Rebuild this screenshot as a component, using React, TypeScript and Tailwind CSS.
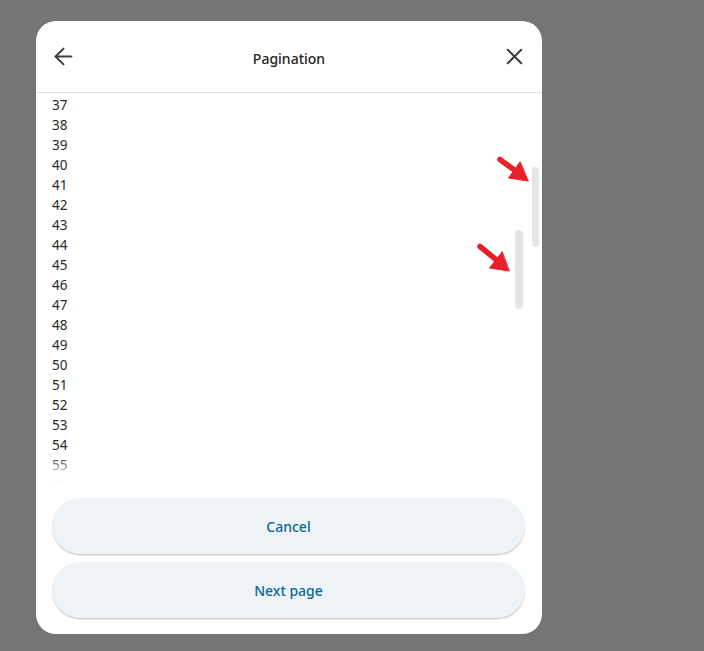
import { ArrowLeft, X } from "lucide-react";

const numbers = Array.from({ length: 20 }, (_, i) => 37 + i);

function Annotations() {
  return (
    <svg className="pointer-events-none absolute left-0 top-0" width="704" height="651" viewBox="0 0 704 651">
      <g fill="#e8202a" stroke="#e8202a" strokeLinecap="round" strokeLinejoin="round">
        <line x1="500" y1="159.5" x2="515" y2="170.5" strokeWidth="5.5" />
        <polygon points="528,181 508.5,178 520,162" strokeWidth="1" />
        <line x1="480" y1="246.5" x2="496" y2="259.5" strokeWidth="5.5" />
        <polygon points="509,271 489.5,268 502,252" strokeWidth="1" />
      </g>
    </svg>
  );
}

export default function App() {
  return (
    <div className="relative h-[651px] w-[704px] overflow-hidden bg-[#757575] pl-[36px] pt-[21px] font-['Noto_Sans',sans-serif]">
      <div className="relative flex h-[613px] w-[506px] flex-col rounded-[20px] bg-white">
        <div className="flex h-[72px] items-center justify-between border-b border-[#e2e2e2] px-[14px]">
          <ArrowLeft size={27} strokeWidth={1.8} color="#3b3f45" />
          <span className="mt-[3px] text-[14px] font-medium text-[#222]">Pagination</span>
          <X size={27} strokeWidth={1.8} color="#3b3f45" />
        </div>

        <div className="relative h-[389px] overflow-hidden pl-[16px] pt-[2px]">
          {numbers.map((n) => (
            <div key={n} className="h-5 text-[13.5px] leading-5 text-[#2a2a2a]">
              {n}
            </div>
          ))}
          <div className="absolute bottom-0 left-0 h-[30px] w-full bg-gradient-to-b from-white/0 to-white" />
          <div className="absolute left-[479px] top-[137px] h-[79px] w-[8px] rounded-full bg-[#e6e6e6]" />
        </div>

        <div className="absolute left-[496px] top-[146px] h-[80px] w-[7px] rounded-full bg-[#e6e6e6]" />

        <div className="mt-[16px] flex flex-col gap-[8px] px-[16px]">
          <button className="h-[56px] w-[473px] rounded-full bg-[#eef3f7] text-[14px] font-medium text-[#0b6796] shadow-[0_1.5px_1px_rgba(0,0,0,0.18)]">
            Cancel
          </button>
          <button className="h-[56px] w-[473px] rounded-full bg-[#eef3f7] text-[14px] font-medium text-[#0b6796] shadow-[0_1.5px_1px_rgba(0,0,0,0.18)]">
            Next page
          </button>
        </div>
      </div>
      <Annotations />
    </div>
  );
}
